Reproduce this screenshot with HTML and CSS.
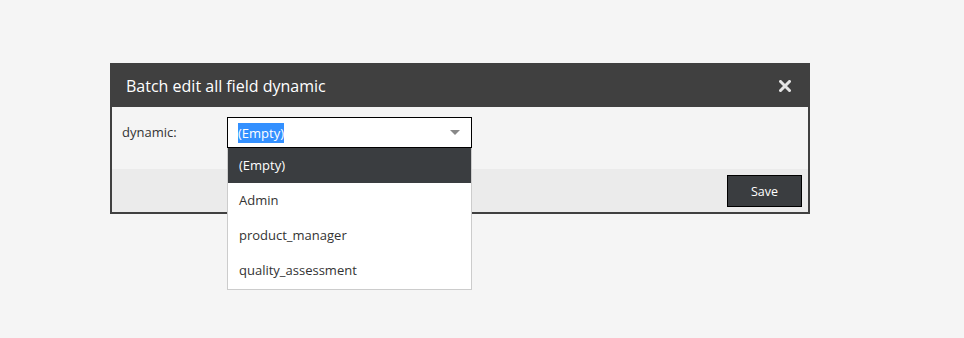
FILE: index.html
```html
<!DOCTYPE html>
<html lang="en">
<head>
  <meta charset="UTF-8">
  <title>Batch edit</title>
  <link rel="stylesheet" href="styles.css">
</head>
<body>
  <div class="dialog">
    <div class="dialog-header">
      <span class="dialog-title">Batch edit all field dynamic</span>
      <svg class="dialog-close" width="12" height="12" viewBox="0 0 12 12">
        <path d="M1.5 1.5 L10.5 10.5 M10.5 1.5 L1.5 10.5" stroke="#e4e4e4" stroke-width="3" stroke-linecap="square"/>
      </svg>
    </div>
    <div class="dialog-body">
      <label class="field-label">dynamic:</label>
      <div class="select">
        <span class="select-value"><span class="selected-text">(Empty)</span></span>
        <span class="select-arrow"></span>
        <ul class="select-menu">
          <li class="active">(Empty)</li>
          <li>Admin</li>
          <li>product_manager</li>
          <li>quality_assessment</li>
        </ul>
      </div>
    </div>
    <div class="dialog-footer">
      <button class="btn-save">Save</button>
    </div>
  </div>
</body>
</html>
```

FILE: styles.css
```css
html {
  height: 100%;
  background: #f5f5f5;
}
body {
  margin: 0;
  min-height: 100%;
  box-sizing: border-box;
  background: #f5f5f5;
  font-family: "Open Sans", Arial, sans-serif;
  padding: 63px 0 0 110px;
}
/* Dialogo principal */
.dialog {
  width: 696px;
  border: 2px solid #404040;
  background: #f4f4f4;
}
.dialog-header {
  height: 42px;
  background: #404040;
  display: flex;
  align-items: center;
  justify-content: space-between;
  padding: 0 17px 0 14px;
  margin-top: -2px;
  padding-top: 2px;
}
.dialog-title {
  color: #ffffff;
  font-size: 16px;
}
.dialog-close {
  display: block;
}
.dialog-body {
  height: 62px;
  box-sizing: border-box;
  padding: 10px 10px 0 10px;
  display: flex;
  align-items: flex-start;
}
.field-label {
  width: 105px;
  font-size: 13px;
  color: #333;
  line-height: 31px;
}
/* Select desplegado */
.select {
  position: relative;
  width: 243px;
  height: 29px;
  border: 1px solid #000;
  background: #fff;
  display: flex;
  align-items: center;
}
.select-value {
  padding-left: 10px;
  font-size: 13px;
  flex: 1;
}
.selected-text {
  background: #3390ff;
  color: #fff;
  padding: 1px 0;
}
.select-arrow {
  width: 0;
  height: 0;
  border-left: 5px solid transparent;
  border-right: 5px solid transparent;
  border-top: 5px solid #888;
  margin-right: 11px;
}
.select-menu {
  position: absolute;
  top: 30px;
  left: -1px;
  width: 243px;
  margin: 0;
  padding: 0 0 1px 0;
  list-style: none;
  background: #fff;
  border: 1px solid #ccc;
  border-top: none;
  z-index: 2;
}
.select-menu li {
  height: 35px;
  line-height: 35px;
  padding-left: 11px;
  font-size: 13px;
  color: #333;
}
.select-menu li.active {
  background: #3a3d40;
  color: #fff;
}
.dialog-footer {
  height: 43px;
  box-sizing: border-box;
  background: #ebebeb;
  display: flex;
  justify-content: flex-end;
  padding: 6px 6px 0 0;
}
.btn-save {
  width: 75px;
  height: 32px;
  background: #3a3d40;
  border: 1px solid #000;
  color: #fff;
  font-family: "Open Sans", Arial, sans-serif;
  font-size: 12.5px;
  padding: 0;
}
```
